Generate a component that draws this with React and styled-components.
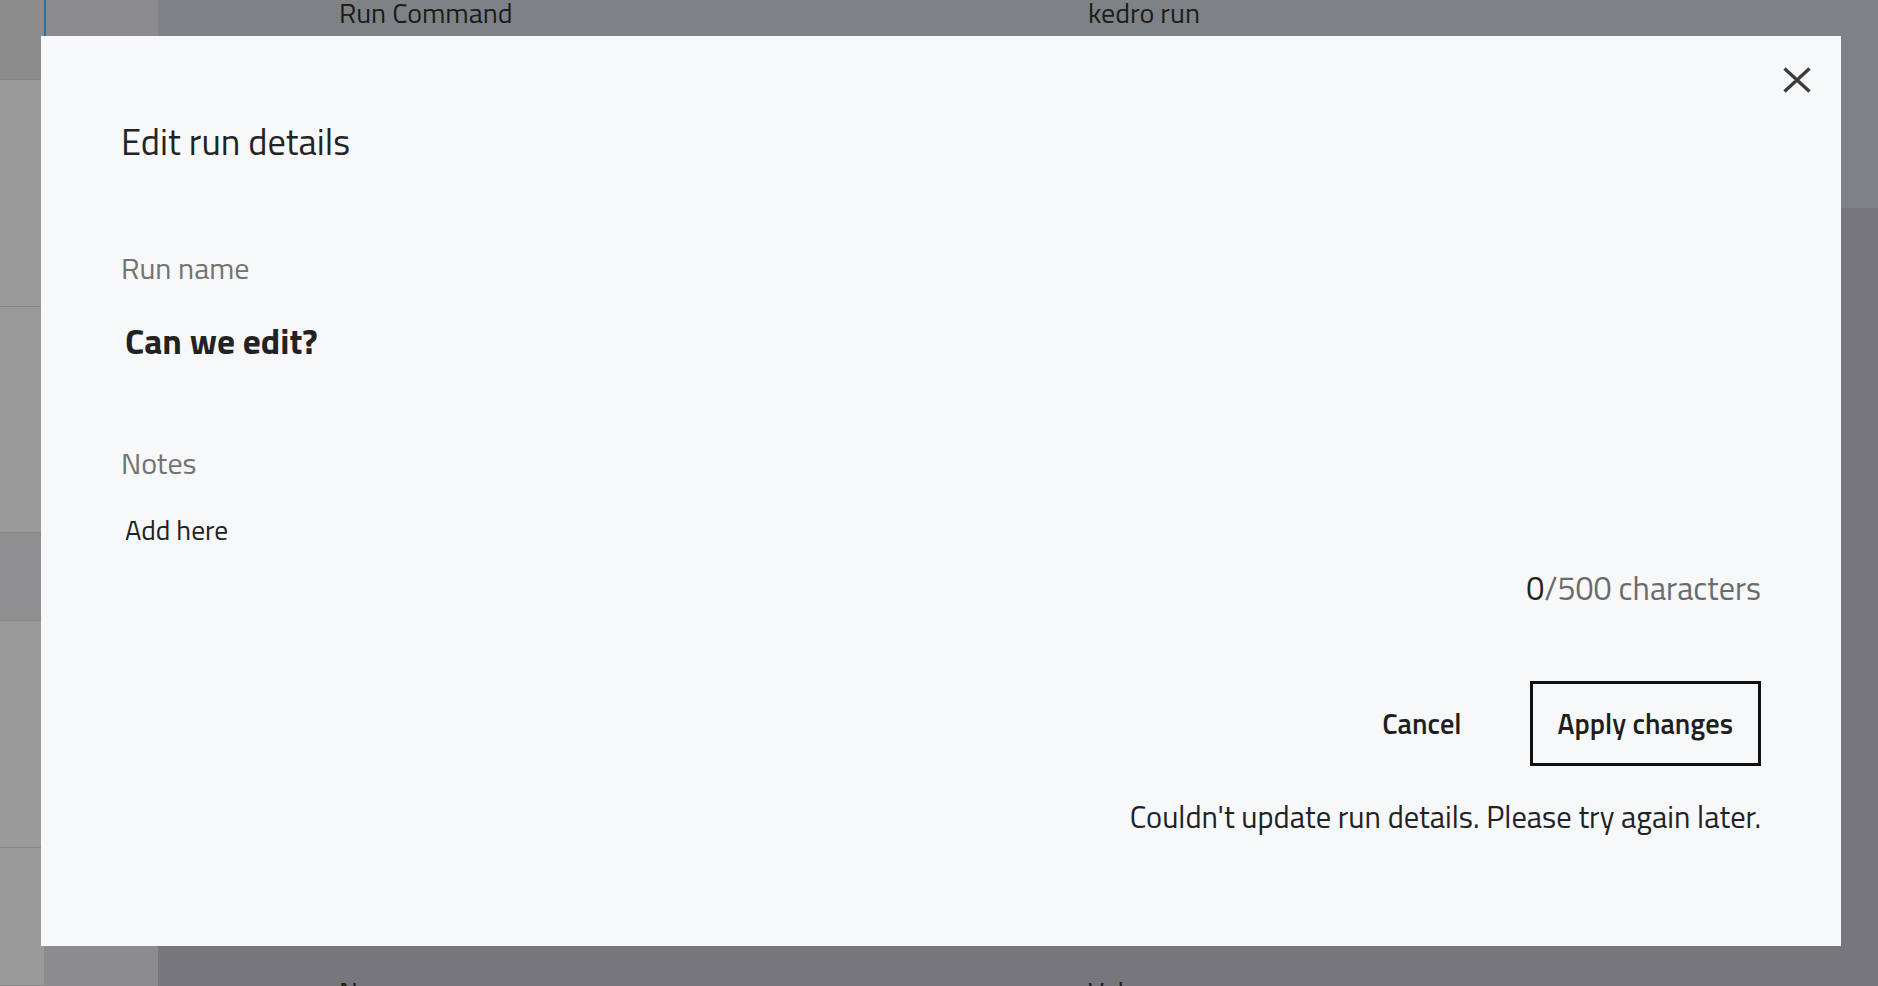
import React from "react";
import styled, { createGlobalStyle } from "styled-components";

const GlobalStyle = createGlobalStyle`
  html, body {
    margin: 0;
    height: 100%;
    overflow: hidden;
  }
  body {
    font-family: "Titillium Web", "Liberation Sans", sans-serif;
    background: #77777b;
  }
  #root {
    height: 100%;
  }
`;

const sidebarRows = [
  { height: 80, tone: "#8c8c8d" },
  { height: 227, tone: "#9a9a9a" },
  { height: 226, tone: "#9a9a9a" },
  { height: 88, tone: "#8f8f91" },
  { height: 227, tone: "#9a9a9a" },
  { height: 138, tone: "#9a9a9a" },
];

const RunsPage = () => (
  <Page>
    <Sidebar>
      {sidebarRows.map((row, i) => (
        <SidebarRow key={i} $height={row.height} $tone={row.tone} />
      ))}
    </Sidebar>
    <RunList>
      <RunItem $selected />
    </RunList>
    <Main>
      <MetaSection>
        <MetaRow>
          <MetaCell>Run Command</MetaCell>
          <MetaCell>kedro run</MetaCell>
        </MetaRow>
      </MetaSection>
      <TableSection>
        <MetaRow>
          <MetaCell>Name</MetaCell>
          <MetaCell>Value</MetaCell>
        </MetaRow>
      </TableSection>
    </Main>
  </Page>
);

const EditRunModal = () => (
  <Modal>
    <CloseButton aria-label="Close">
      <svg width="28" height="26" viewBox="0 0 28 26">
        <path d="M1.5 1.5 L26.5 24.5 M26.5 1.5 L1.5 24.5" stroke="#3d3d3d" strokeWidth="3.4" fill="none" />
      </svg>
    </CloseButton>
    <Title>Edit run details</Title>
    <Label $gap={93}>Run name</Label>
    <NameInput defaultValue="Can we edit?" />
    <Label $gap={90}>Notes</Label>
    <NotesInput placeholder="Add here" rows={1} />
    <Counter>
      <CountValue>0</CountValue>/500 characters
    </Counter>
    <Actions>
      <GhostButton>Cancel</GhostButton>
      <PrimaryButton>Apply changes</PrimaryButton>
    </Actions>
    <ErrorText>Couldn't update run details. Please try again later.</ErrorText>
  </Modal>
);

export default function App() {
  return (
    <>
      <GlobalStyle />
      <RunsPage />
      <EditRunModal />
    </>
  );
}

const Page = styled.div`
  display: flex;
  height: 100%;
  overflow: hidden;
`;

const Sidebar = styled.div`
  width: 44px;
  flex-shrink: 0;
  display: flex;
  flex-direction: column;
`;

const SidebarRow = styled.div`
  height: ${(p) => p.$height}px;
  flex-shrink: 0;
  background: ${(p) => p.$tone};
  border-bottom: 1px solid #878787;
  box-sizing: border-box;
`;

const RunList = styled.div`
  width: 114px;
  flex-shrink: 0;
  background: #8c8c8e;
`;

const RunItem = styled.div`
  height: 80px;
  border-left: 2px solid ${(p) => (p.$selected ? "#2f6f9e" : "transparent")};
`;

const Main = styled.div`
  flex: 1;
  display: flex;
  flex-direction: column;
`;

const MetaSection = styled.div`
  height: 208px;
  background: #7f8285;
  flex-shrink: 0;
`;

const TableSection = styled.div`
  flex: 1;
  background: #77777b;
  padding-top: 771px;
`;

const MetaRow = styled.div`
  display: grid;
  grid-template-columns: 749px 1fr;
  padding-left: 181px;
`;

const MetaCell = styled.div`
  font-size: 28px;
  line-height: 26px;
  color: #1c1c1c;
`;

const Modal = styled.div`
  position: fixed;
  left: 41px;
  top: 36px;
  width: 1800px;
  height: 910px;
  box-sizing: border-box;
  padding: 88px 80px 0;
  background: #f7f8fa;
  display: flex;
  flex-direction: column;
`;

const CloseButton = styled.button`
  position: absolute;
  top: 31px;
  right: 30px;
  padding: 0;
  border: 0;
  background: none;
  display: flex;
  cursor: pointer;
`;

const Title = styled.h2`
  margin: 0;
  font-size: 36.4px;
  line-height: 36px;
  font-weight: 400;
  color: #232323;
`;

const Label = styled.label`
  margin-top: ${(p) => p.$gap}px;
  font-size: 30px;
  line-height: 30px;
  color: #737373;
`;

const NameInput = styled.input`
  margin-top: 40px;
  padding: 0 0 0 4px;
  border: 0;
  background: transparent;
  font-family: inherit;
  font-size: 35.4px;
  line-height: 35px;
  height: 35px;
  font-weight: 700;
  color: #222;
  outline: none;
`;

const NotesInput = styled.textarea`
  margin-top: 38px;
  padding: 0 0 0 4px;
  border: 0;
  background: transparent;
  resize: none;
  font-family: inherit;
  font-size: 27.5px;
  line-height: 28px;
  height: 28px;
  overflow: hidden;
  outline: none;
  &::placeholder {
    color: #222;
    opacity: 1;
  }
`;

const Counter = styled.div`
  margin-top: 28px;
  align-self: flex-end;
  font-size: 32.2px;
  line-height: 32px;
  color: #6b6b6b;
`;

const CountValue = styled.span`
  color: #222;
`;

const Actions = styled.div`
  margin-top: 77px;
  display: flex;
  justify-content: flex-end;
  gap: 40px;
`;

const GhostButton = styled.button`
  height: 85px;
  padding: 0 25px;
  border: 3px solid transparent;
  background: transparent;
  font-family: inherit;
  font-size: 28.4px;
  font-weight: 600;
  color: #1e1e1e;
  cursor: pointer;
`;

const PrimaryButton = styled(GhostButton)`
  border-color: #111;
`;

const ErrorText = styled.p`
  margin: 36px 0 0;
  align-self: flex-end;
  font-size: 30.5px;
  line-height: 30px;
  color: #222;
`;
